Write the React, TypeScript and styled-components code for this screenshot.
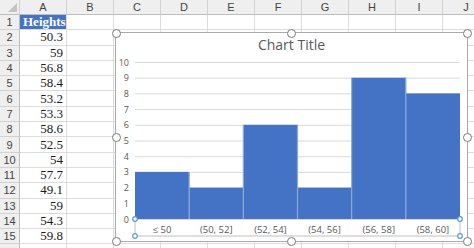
import React from "react";
import styled, { createGlobalStyle } from "styled-components";

const GlobalStyle = createGlobalStyle`
  html, body {
    margin: 0;
    padding: 0;
    background: #ffffff;
    overflow: hidden;
  }
`;

const Sheet = styled.div`
  position: relative;
  width: 474px;
  height: 248px;
  overflow: hidden;
  display: grid;
  grid-template-columns: 20px repeat(10, 47px);
  grid-template-rows: 15px repeat(16, 15.3px);
  font-family: "Liberation Sans", Arial, sans-serif;
`;

const Corner = styled.div`
  position: relative;
  background: #efefef;
  border-right: 1px solid #cfcfcf;
  border-bottom: 1px solid #bdbdbd;
  box-sizing: border-box;
  &::after {
    content: "";
    position: absolute;
    right: 2px;
    bottom: 2px;
    border-left: 9px solid transparent;
    border-bottom: 9px solid #c4c4c4;
  }
`;

const ColHead = styled.div`
  background: #efefef;
  border-right: 1px solid #d2d2d2;
  border-bottom: 1px solid #bdbdbd;
  box-sizing: border-box;
  color: #444;
  font-size: 11px;
  display: flex;
  align-items: center;
  justify-content: center;
`;

const RowHead = styled.div`
  background: #efefef;
  border-right: 1px solid #bdbdbd;
  border-bottom: 1px solid #d2d2d2;
  box-sizing: border-box;
  color: #444;
  font-size: 11px;
  display: flex;
  align-items: center;
  justify-content: center;
`;

const Cell = styled.div<{ $head?: boolean }>`
  border-right: 1px solid #dcdcdc;
  border-bottom: 1px solid #dcdcdc;
  box-sizing: border-box;
  font-family: "Liberation Serif", "Times New Roman", serif;
  font-size: 13px;
  display: flex;
  align-items: center;
  justify-content: ${(p) => (p.$head ? "flex-start" : "flex-end")};
  padding: 0 3px;
  white-space: nowrap;
  color: ${(p) => (p.$head ? "#ffffff" : "#1a1a1a")};
  background: ${(p) => (p.$head ? "#4472c4" : "transparent")};
  font-weight: ${(p) => (p.$head ? "bold" : "normal")};
`;

const Chart = styled.div`
  position: absolute;
  left: 115px;
  top: 32px;
  width: 353px;
  height: 210px;
  box-sizing: border-box;
  background: #ffffff;
  border: 1px solid #a9a9a9;
  display: flex;
  flex-direction: column;
`;

const Title = styled.div`
  height: 24px;
  line-height: 24px;
  text-align: center;
  font-family: "Open Sans", "Liberation Sans", sans-serif;
  font-size: 14px;
  color: #595959;
`;

const Handle = styled.span<{ $x: string; $y: string }>`
  position: absolute;
  left: ${(p) => p.$x};
  top: ${(p) => p.$y};
  width: 7px;
  height: 7px;
  margin: -4.5px 0 0 -4.5px;
  border-radius: 50%;
  border: 1px solid #7a7a7a;
  background: #ffffff;
`;

const heights = [
  "50.3", "59", "56.8", "58.4", "53.2", "53.3", "58.6",
  "52.5", "54", "57.7", "49.1", "59", "54.3", "59.8",
];
const cols = ["A", "B", "C", "D", "E", "F", "G", "H", "I", "J"];

const bins = [
  { label: "≤ 50", count: 3 },
  { label: "(50, 52]", count: 2 },
  { label: "(52, 54]", count: 6 },
  { label: "(54, 56]", count: 2 },
  { label: "(56, 58]", count: 9 },
  { label: "(58, 60]", count: 8 },
];

const left = 19;
const right = 344;
const zero = 162;
const unit = 15.7;
const axisBottom = 179;
const binW = (right - left) / bins.length;

function Histogram() {
  return (
    <svg width="351" height="184" style={{ display: "block" }}>
      {Array.from({ length: 11 }, (_, i) => (
        <g key={i}>
          <line
            x1={left}
            x2={right}
            y1={zero - i * unit + 0.5}
            y2={zero - i * unit + 0.5}
            stroke="#d9d9d9"
            strokeWidth={1}
          />
          <text
            x={13}
            y={zero - i * unit + 3.5}
            textAnchor="end"
            fontSize="9"
            fill="#595959"
            fontFamily="'Open Sans', 'Liberation Sans', sans-serif"
          >
            {i}
          </text>
        </g>
      ))}
      {bins.map((b, i) => (
        <rect
          key={b.label}
          x={left + i * binW}
          y={zero - b.count * unit}
          width={binW}
          height={b.count * unit}
          fill="#4472c4"
        />
      ))}
      {bins.slice(1).map((b, i) => (
        <line
          key={b.label}
          x1={left + (i + 1) * binW}
          x2={left + (i + 1) * binW}
          y1={zero - Math.max(b.count, bins[i].count) * unit}
          y2={zero}
          stroke="#8eaadc"
          strokeWidth={1.2}
        />
      ))}
      {bins.map((b, i) => (
        <text
          key={b.label}
          x={left + (i + 0.5) * binW}
          y={176}
          textAnchor="middle"
          fontSize="9.5"
          fill="#595959"
          fontFamily="'Open Sans', 'Liberation Sans', sans-serif"
        >
          {b.label}
        </text>
      ))}
      <path
        d={`M${left} ${zero} V${axisBottom} H${right} V${zero}`}
        fill="none"
        stroke="#bfbfbf"
        strokeWidth={1}
      />
      {[
        [left, zero],
        [left, axisBottom],
        [right, zero],
        [right, axisBottom],
      ].map(([x, y]) => (
        <circle
          key={`${x}-${y}`}
          cx={x}
          cy={y}
          r={2.3}
          fill="#ffffff"
          stroke="#5b9bd5"
          strokeWidth={1.2}
        />
      ))}
    </svg>
  );
}

export default function App() {
  return (
    <>
      <GlobalStyle />
      <Sheet>
        <Corner />
        {cols.map((c) => (
          <ColHead key={c}>{c}</ColHead>
        ))}
        {Array.from({ length: 16 }, (_, r) => (
          <React.Fragment key={r}>
            {/* row 16 only peeks in at the bottom edge, so no number */}
            <RowHead>{r < 15 ? r + 1 : ""}</RowHead>
            {cols.map((c) =>
              c === "A" && r === 0 ? (
                <Cell key={c} $head>
                  Heights
                </Cell>
              ) : (
                <Cell key={c}>
                  {c === "A" && r > 0 && r <= heights.length ? heights[r - 1] : ""}
                </Cell>
              )
            )}
          </React.Fragment>
        ))}
        <Chart>
          <Title>Chart Title</Title>
          <Histogram />
          {[
            ["0%", "0%"],
            ["50%", "0%"],
            ["100%", "0%"],
            ["0%", "50%"],
            ["100%", "50%"],
            ["0%", "100%"],
            ["50%", "100%"],
            ["100%", "100%"],
          ].map(([x, y]) => (
            <Handle key={`${x}-${y}`} $x={x} $y={y} />
          ))}
        </Chart>
      </Sheet>
    </>
  );
}
